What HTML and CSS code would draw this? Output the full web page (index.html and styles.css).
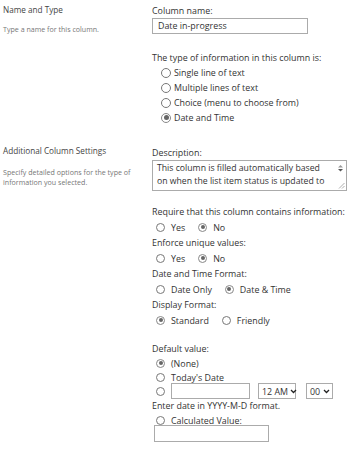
FILE: index.html
```html
<!DOCTYPE html>
<html>
<head>
<meta charset="utf-8">
<link rel="stylesheet" href="styles.css">
</head>
<body>
<div class="page">
  <section class="sec sec1">
    <div class="left">
      <div class="title">Name and Type</div>
      <div class="desc">Type a name for this column.</div>
    </div>
    <div class="right">
      <div class="lbl">Column name:</div>
      <div class="input name-input">Date in-progress</div>
      <div class="lbl type-lbl">The type of information in this column is:</div>
      <div class="types">
        <div class="trow"><span class="radio big"></span>Single line of text</div>
        <div class="trow"><span class="radio big"></span>Multiple lines of text</div>
        <div class="trow"><span class="radio big"></span>Choice (menu to choose from)</div>
        <div class="trow"><span class="radio big on"></span>Date and Time</div>
      </div>
    </div>
  </section>
  <section class="sec sec2">
    <div class="left">
      <div class="title">Additional Column Settings</div>
      <div class="desc desc2">Specify detailed options for the type of information you selected.</div>
    </div>
    <div class="right">
      <div class="lbl">Description:</div>
      <div class="textarea">
        <div class="ta-text">This column is filled automatically based on when the list item status is updated to</div>
        <div class="ta-scroll">
          <svg class="arr" width="7" height="8" viewBox="0 0 7 8"><path d="M1 3.5 L3.5 1 L6 3.5Z" fill="#9a9a9a"/><path d="M1 5 L3.5 7.5 L6 5Z" fill="#555"/></svg>
        </div>
        <svg class="grip" width="7" height="7" viewBox="0 0 7 7"><path d="M6.5 1 L1 6.5 M6.5 4 L4 6.5" stroke="#9a9a9a" stroke-width="0.8"/></svg>
      </div>
      <div class="lbl req">Require that this column contains information:</div>
      <div class="opts"><span class="opt"><span class="radio"></span>Yes</span><span class="opt"><span class="radio on"></span>No</span></div>
      <div class="lbl">Enforce unique values:</div>
      <div class="opts"><span class="opt"><span class="radio"></span>Yes</span><span class="opt"><span class="radio on"></span>No</span></div>
      <div class="lbl">Date and Time Format:</div>
      <div class="opts"><span class="opt"><span class="radio"></span>Date Only</span><span class="opt"><span class="radio on"></span>Date &amp; Time</span></div>
      <div class="lbl">Display Format:</div>
      <div class="opts"><span class="opt"><span class="radio on"></span>Standard</span><span class="opt"><span class="radio"></span>Friendly</span></div>
      <div class="lbl defv">Default value:</div>
      <div class="drow"><span class="radio on"></span>(None)</div>
      <div class="drow"><span class="radio"></span>Today's Date</div>
      <div class="drow daterow"><span class="radio"></span><span class="input date-input"></span><span class="select sel-hour">12 AM<svg width="7" height="5" viewBox="0 0 7 5"><path d="M1 1 L3.5 3.5 L6 1" stroke="#222" stroke-width="1.3" fill="none"/></svg></span><span class="select sel-min">00<svg width="7" height="5" viewBox="0 0 7 5"><path d="M1 1 L3.5 3.5 L6 1" stroke="#222" stroke-width="1.3" fill="none"/></svg></span></div>
      <div class="lbl hint">Enter date in YYYY-M-D format.</div>
      <div class="drow"><span class="radio"></span>Calculated Value:</div>
      <div class="input calc-input"></div>
    </div>
  </section>
</div>
</body>
</html>
```
FILE: styles.css
```css
* { box-sizing: border-box; }
html, body { margin: 0; padding: 0; background: #fff; }
body {
  font-family: "Segoe UI", "Open Sans", "Noto Sans", sans-serif;
  font-size: 8.9px;
  color: #333;
  width: 353px;
  height: 450px;
  overflow: hidden;
}
.page { padding: 3px 0 0 3px; }
.sec { display: grid; grid-template-columns: 149px 1fr; }
.left { padding-top: 1px; }
.title { font-size: 8.2px; line-height: 12px; color: #444; }
.desc { font-size: 7.1px; line-height: 10px; color: #777; margin-top: 8px; }
.desc2 { width: 146px; margin-top: 10px; }
.lbl { line-height: 15px; white-space: nowrap; }
.input {
  border: 1px solid #ababab;
  height: 16px;
  line-height: 14px;
  padding-left: 5px;
  background: #fff;
}
.name-input { width: 156px; }
.type-lbl { margin-top: 16px; }
.types { padding-left: 9px; }
.trow { display: flex; align-items: center; height: 15px; }
.radio {
  display: inline-block;
  width: 9px; height: 9px;
  border: 1px solid #777;
  border-radius: 50%;
  margin-right: 6px;
  flex: none;
  position: relative;
  background: #fff;
}
.radio.big { width: 10px; height: 10px; margin-right: 3px; }
.radio.on { border-color: #888; }
.radio.on::after {
  content: "";
  position: absolute;
  left: 1.5px; top: 1.5px; right: 1.5px; bottom: 1.5px;
  border-radius: 50%;
  background: #666;
}
.sec2 { margin-top: 20px; }
.sec2 .left { padding-top: 0; }
.textarea {
  position: relative;
  width: 195px;
  height: 31px;
  border: 1px solid #ababab;
  display: flex;
}
.ta-text { flex: 1; padding: 1px 8px 0 4px; line-height: 13px; font-size: 8.7px; overflow: hidden; }
.ta-scroll { width: 12px; display: flex; justify-content: center; padding-top: 3px; }
.grip { position: absolute; right: 1px; bottom: 1px; }
.req { margin-top: 13px; }
.opts { display: flex; align-items: center; height: 16px; padding-left: 4px; white-space: nowrap; }
.opt { display: inline-flex; align-items: center; margin-right: 13px; }
.defv { margin-top: 13px; }
.drow { display: flex; align-items: center; height: 14px; padding-left: 4px; white-space: nowrap; }
.daterow { height: 14px; }
.date-input { width: 79px; height: 16px; margin-right: 8px; }
.select {
  display: inline-flex; align-items: center; justify-content: space-between;
  height: 16px; border: 1px solid #ababab; padding: 0 2px 0 3px;
  white-space: nowrap; flex: none; gap: 2px;
}
.sel-hour { width: 38px; margin-right: 10px; }
.sel-min { width: 27px; }
.select svg { flex: none; }
.hint { line-height: 15px; }
.calc-input { width: 115px; height: 17px; margin-left: 2px; margin-top: -2px; }
```
